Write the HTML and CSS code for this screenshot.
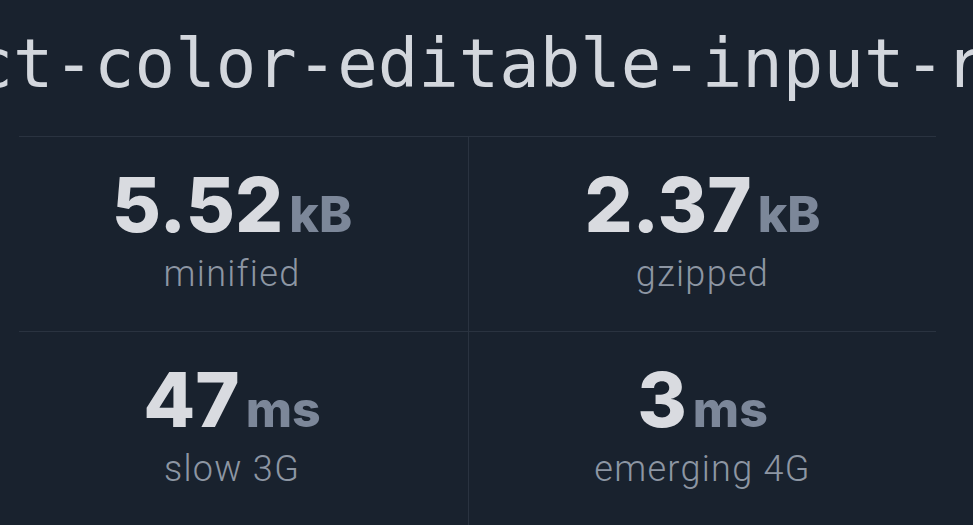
FILE: index.html
```html
<!DOCTYPE html>
<html lang="en">
<head>
<meta charset="utf-8">
<title>react-color-editable-input-rgba</title>
<link rel="stylesheet" href="styles.css">
</head>
<body>
<header class="title-wrap">
  <h1 class="title">react-color-editable-input-rgba</h1>
</header>
<section class="stats">
  <div class="row">
    <div class="cell">
      <div class="value">5.52<span class="unit">kB</span></div>
      <div class="label">minified</div>
    </div>
    <div class="cell">
      <div class="value">2.37<span class="unit">kB</span></div>
      <div class="label">gzipped</div>
    </div>
  </div>
  <div class="row">
    <div class="cell">
      <div class="value">47<span class="unit">ms</span></div>
      <div class="label">slow 3G</div>
    </div>
    <div class="cell">
      <div class="value">3<span class="unit">ms</span></div>
      <div class="label">emerging 4G</div>
    </div>
  </div>
</section>
</body>
</html>
```
FILE: styles.css
```css
html, body {
  margin: 0;
  padding: 0;
  background: #19222e;
  overflow: hidden;
}

body {
  width: 973px;
  height: 525px;
}

.title-wrap {
  height: 136px;
  overflow: hidden;
  box-sizing: border-box;
  padding-top: 31px;
}

.title {
  margin: 0 0 0 -149px;
  font-family: "DejaVu Sans Mono", monospace;
  font-weight: normal;
  font-size: 67.3px;
  line-height: 1;
  color: #d3d7dd;
  white-space: nowrap;
}

.stats {
  width: 940px;
  margin-left: -4px;
}

.row {
  display: grid;
  grid-template-columns: 450px 467px;
  margin-left: 23px;
  border-top: 1px solid #2a3340;
  height: 195px;
  box-sizing: border-box;
}

.cell {
  display: flex;
  flex-direction: column;
  align-items: center;
  padding-top: 30px;
}

.cell:first-child {
  margin-left: -23px;
  border-right: 1px solid #2a3340;
}

.value {
  font-family: Inter, "Noto Sans", sans-serif;
  font-weight: 800;
  font-size: 75.6px;
  line-height: 1;
  color: #d9dbe0;
  white-space: nowrap;
}

.unit {
  font-size: 50px;
  color: #7c8799;
  margin-left: 6px;
}

.label {
  margin-top: 13px;
  font-family: Roboto, "Noto Sans", sans-serif;
  font-weight: 300;
  font-size: 36px;
  line-height: 1;
  letter-spacing: 1.3px;
  color: #8d96a3;
  white-space: nowrap;
}
```
